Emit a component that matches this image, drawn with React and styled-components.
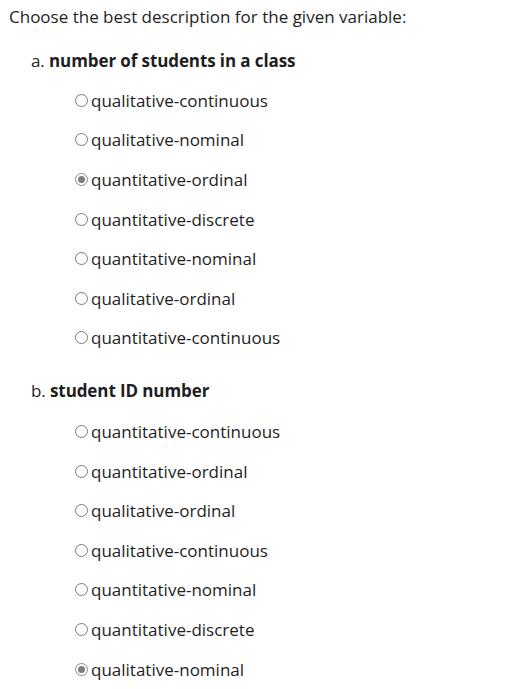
import React from "react";
import styled, { createGlobalStyle } from "styled-components";

const GlobalStyle = createGlobalStyle`
  body {
    margin: 0;
    background: #fff;
    font-family: "Open Sans", "Noto Sans", sans-serif;
    color: #1e1e1e;
  }
`;

const Page = styled.div`
  padding: 7px 9px;
`;

const Title = styled.div`
  font-size: 17px;
  line-height: 20px;
  height: 20px;
`;

const Section = styled.div`
  margin-top: ${(props) => props.gap}px;
`;

const Label = styled.div`
  padding-left: 22px;
  font-size: 17px;
  line-height: 20px;
  height: 20px;
  letter-spacing: -0.1px;
  b {
    font-weight: 700;
  }
`;

const Options = styled.div`
  padding-left: 66px;
  margin-top: ${(props) => props.offset}px;
  display: flex;
  flex-direction: column;
`;

const Option = styled.label`
  display: flex;
  align-items: center;
  gap: 3px;
  height: 39.6px;
  font-size: 17px;
`;

const Radio = styled.span`
  width: 13px;
  height: 13px;
  box-sizing: border-box;
  border-radius: 50%;
  border: 1px solid ${(props) => (props.checked ? "#8a8a8a" : "#7a7a7a")};
  background: #fff;
  display: flex;
  align-items: center;
  justify-content: center;
  flex-shrink: 0;
  &::after {
    content: "";
    display: ${(props) => (props.checked ? "block" : "none")};
    width: 7px;
    height: 7px;
    border-radius: 50%;
    background: #7d7d7d;
  }
`;

const questions = [
  {
    key: "a.",
    text: "number of students in a class",
    gap: 24,
    offset: 9.5,
    answer: 2,
    options: [
      "qualitative-continuous",
      "qualitative-nominal",
      "quantitative-ordinal",
      "quantitative-discrete",
      "quantitative-nominal",
      "qualitative-ordinal",
      "quantitative-continuous",
    ],
  },
  {
    key: "b.",
    text: "student ID number",
    gap: 23,
    offset: 11,
    answer: 6,
    options: [
      "quantitative-continuous",
      "quantitative-ordinal",
      "qualitative-ordinal",
      "qualitative-continuous",
      "quantitative-nominal",
      "quantitative-discrete",
      "qualitative-nominal",
    ],
  },
];

const App = () => {
  return (
    <Page>
      <GlobalStyle />
      <Title>Choose the best description for the given variable:</Title>
      {questions.map((q) => (
        <Section key={q.key} gap={q.gap}>
          <Label>
            {q.key} <b>{q.text}</b>
          </Label>
          <Options offset={q.offset}>
            {q.options.map((opt, i) => (
              <Option key={opt}>
                <Radio checked={i === q.answer} />
                {opt}
              </Option>
            ))}
          </Options>
        </Section>
      ))}
    </Page>
  );
};

export default App;
